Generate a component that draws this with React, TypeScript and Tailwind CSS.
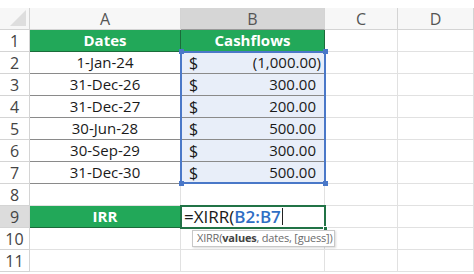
const font = { fontFamily: '"Open Sans", "Noto Sans", sans-serif' };

const cols = ["A", "B", "C", "D"];

const rows = [
  { date: "1-Jan-24", amount: "(1,000.00)", neg: true },
  { date: "31-Dec-26", amount: "300.00", neg: false },
  { date: "31-Dec-27", amount: "200.00", neg: false },
  { date: "30-Jun-28", amount: "500.00", neg: false },
  { date: "30-Sep-29", amount: "300.00", neg: false },
  { date: "31-Dec-30", amount: "500.00", neg: false },
];

function RowHead({ n, active }: { n: number; active?: boolean }) {
  return (
    <div
      className={`w-[30px] h-[22px] shrink-0 flex items-center justify-center border-r border-b border-[#d4d4d4] text-[16px] text-[#444] ${
        active ? "bg-[#dcdcdc]" : "bg-white"
      }`}
    >
      {n}
    </div>
  );
}

function Empty({ w }: { w: string }) {
  return <div className={`${w} h-[22px] shrink-0 border-r border-b border-[#e1e1e1]`} />;
}

export default function App() {
  return (
    <div className="w-[474px] h-[274px] bg-white overflow-hidden relative pt-[8px]" style={font}>
      {/* column headers */}
      <div className="flex h-[22px]">
        <div className="w-[30px] shrink-0 bg-[#f7f7f7] border-r border-b border-[#d4d4d4] relative">
          <div className="absolute right-[3px] bottom-[3px] w-0 h-0 border-l-[16px] border-l-transparent border-b-[16px] border-b-[#dedede]" />
        </div>
        {cols.map((c, i) => (
          <div
            key={c}
            className={`${["w-[151px]", "w-[144px]", "w-[73px]", "w-[76px]"][i]} shrink-0 flex items-center justify-center text-[16px] text-[#555] border-r border-b border-[#d4d4d4] ${
              c === "B" ? "bg-[#d6d6d6] border-b-[#9a9a9a]" : "bg-[#f7f7f7]"
            }`}
          >
            {c}
          </div>
        ))}
      </div>

      {/* row 1 */}
      <div className="flex">
        <RowHead n={1} />
        <div className="w-[151px] h-[22px] shrink-0 bg-[#22a859] border-r border-r-[#1b6b3a] border-b border-b-[#1b6b3a] flex items-center justify-center text-white font-bold text-[15px]">
          Dates
        </div>
        <div className="w-[144px] h-[22px] shrink-0 bg-[#22a859] border-r border-b border-[#1b6b3a] flex items-center justify-center text-white font-bold text-[15px]">
          Cashflows
        </div>
        <Empty w="w-[73px]" />
        <Empty w="w-[76px]" />
      </div>

      {/* data rows */}
      {rows.map((r, i) => (
        <div key={r.date} className="flex">
          <RowHead n={i + 2} />
          <div className="w-[151px] h-[22px] shrink-0 border-r border-b border-[#8a8a8a] flex items-center justify-center text-[15px] text-[#1a1a1a]">
            {r.date}
          </div>
          <div className="w-[144px] h-[22px] shrink-0 bg-[#e8eef9] border-r border-b border-[#8a8a8a] flex items-center justify-between pl-[8px] text-[15px] text-[#1a1a1a]">
            <span className="text-[16px]">$</span>
            <span className={r.neg ? "pr-[3px]" : "pr-[8px]"}>{r.amount}</span>
          </div>
          <Empty w="w-[73px]" />
          <Empty w="w-[76px]" />
        </div>
      ))}

      {/* row 8 */}
      <div className="flex">
        <RowHead n={8} />
        <Empty w="w-[151px]" />
        <Empty w="w-[144px]" />
        <Empty w="w-[73px]" />
        <Empty w="w-[76px]" />
      </div>

      {/* row 9 */}
      <div className="flex">
        <RowHead n={9} active />
        <div className="w-[151px] h-[22px] shrink-0 bg-[#22a859] border-r border-b border-[#1b6b3a] flex items-center justify-center text-white font-bold text-[15px]">
          IRR
        </div>
        <div className="w-[144px] h-[22px] shrink-0 border-r border-b border-[#e1e1e1] flex items-center pl-[3px] text-[17px] text-[#1a1a1a] whitespace-nowrap">
          =XIRR(<span className="text-[#2f6ec4] font-semibold">B2:B7</span>
          <span className="inline-block w-px h-[17px] bg-[#222] ml-[1px]" />
        </div>
        <Empty w="w-[73px]" />
        <Empty w="w-[76px]" />
      </div>

      {/* rows 10-11 */}
      {[10, 11].map((n) => (
        <div key={n} className="flex">
          <RowHead n={n} />
          <Empty w="w-[151px]" />
          <Empty w="w-[144px]" />
          <Empty w="w-[73px]" />
          <Empty w="w-[76px]" />
        </div>
      ))}

      {/* selection B2:B7 */}
      <div className="absolute left-[180px] top-[51px] w-[146px] h-[133px] border-2 border-[#4a78c8] pointer-events-none" />
      <div className="absolute left-[179px] top-[49px] w-[5px] h-[5px] bg-[#4a78c8]" />
      <div className="absolute left-[323px] top-[49px] w-[5px] h-[5px] bg-[#4a78c8]" />
      <div className="absolute left-[179px] top-[181px] w-[5px] h-[5px] bg-[#4a78c8]" />
      <div className="absolute left-[323px] top-[181px] w-[5px] h-[5px] bg-[#4a78c8]" />

      {/* active cell B9 */}
      <div className="absolute left-[180px] top-[205px] w-[146px] h-[24px] border-2 border-[#217346] pointer-events-none" />
      <div className="absolute left-[323px] top-[226px] w-[5px] h-[5px] bg-[#217346] border border-white" />

      {/* tooltip */}
      <div className="absolute left-[192px] top-[230px] w-[143px] h-[17px] px-[4px] bg-white border border-[#c8c8c8] shadow-[1px_1px_2px_rgba(0,0,0,0.15)] flex items-center text-[11px] tracking-[-0.2px] text-[#6b6b6b] whitespace-nowrap">
        XIRR(<span className="font-bold text-[#444]">values</span>, dates, [guess])
      </div>
    </div>
  );
}
